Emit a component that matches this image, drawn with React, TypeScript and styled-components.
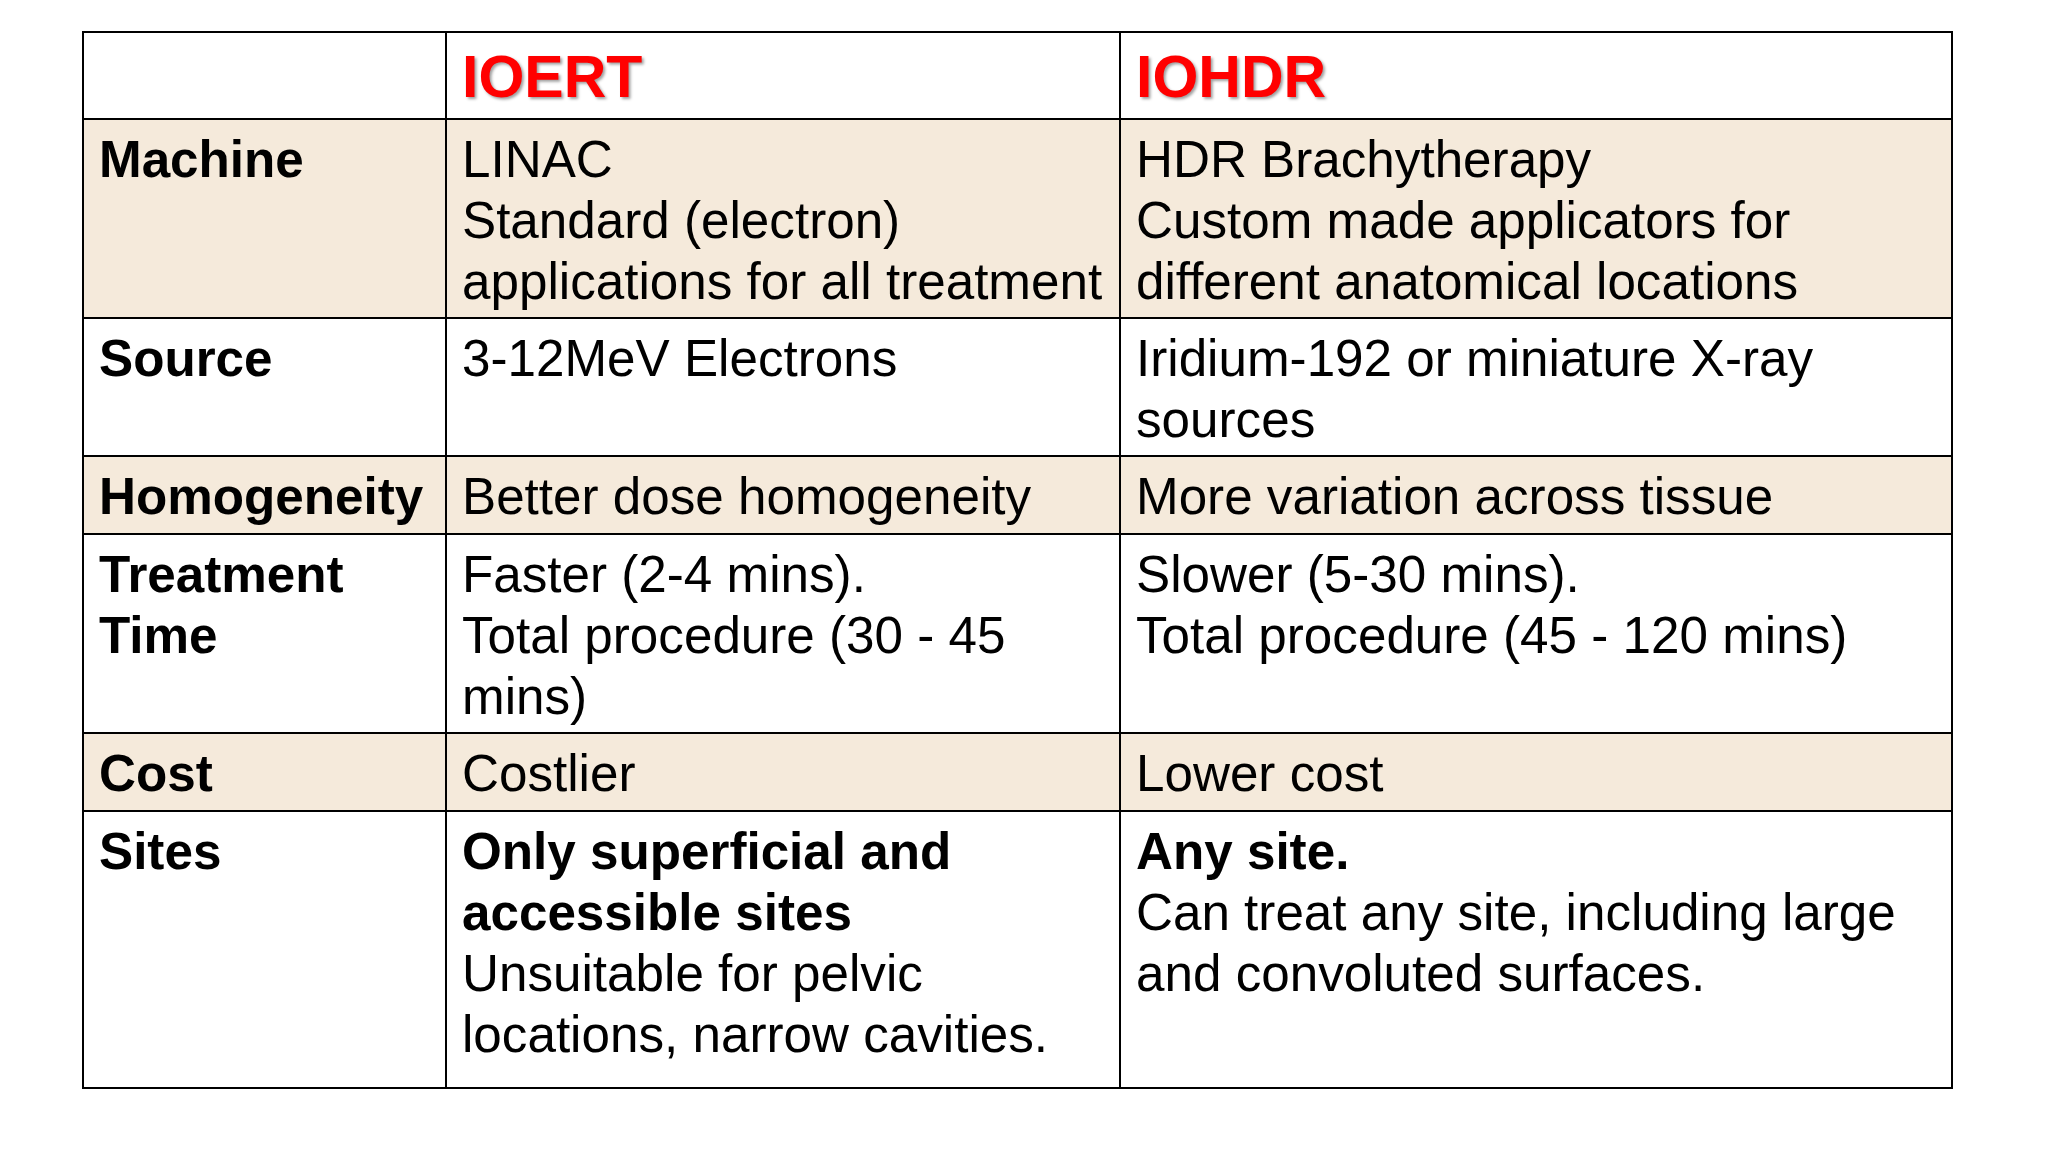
import React from "react";
import styled, {createGlobalStyle} from "styled-components";

const GlobalStyle = createGlobalStyle`
  html, body {
    margin: 0;
    padding: 0;
    background: #ffffff;
  }

  body {
    font-family: "Liberation Sans", Arial, sans-serif;
    color: #000000;
  }
`;

const Page = styled.div`
  width: 2048px;
  height: 1152px;
  padding: 31px 0 0 82px;
  box-sizing: border-box;
`;

const Table = styled.div`
  display: grid;
  grid-template-columns: 363px 674px 832px;
  grid-template-rows: 87px 199px 138px 78px 199px 78px 277px;
  width: max-content;
  border-top: 2px solid #000;
  border-left: 2px solid #000;
`;

const Cell = styled.div<{ $shaded?: boolean }>`
  box-sizing: border-box;
  border-right: 2px solid #000;
  border-bottom: 2px solid #000;
  background: ${({$shaded}) => ($shaded ? "#f5eadb" : "#ffffff")};
  padding: 9px 0 0 15px;
  font-size: 51.2px;
  line-height: 61px;
  white-space: nowrap;
  overflow: hidden;
`;

const Label = styled(Cell)`
  font-weight: 700;
`;

const HeadCell = styled(Cell)`
  padding-top: 9px;
  font-size: 59px;
  line-height: 71px;
  font-weight: 700;
  color: #ff0000;
  text-shadow: 2px 2px 3px rgba(0, 0, 0, 0.38);
`;

const Strong = styled.b`
  font-weight: 700;
`;

type Row = {
  label: React.ReactNode;
  ioert: React.ReactNode;
  iohdr: React.ReactNode;
};

const rows: Row[] = [
  {
    label: "Machine",
    ioert: <>LINAC<br />Standard (electron)<br />applications for all treatment</>,
    iohdr: <>HDR Brachytherapy<br />Custom made applicators for<br />different anatomical locations</>,
  },
  {
    label: "Source",
    ioert: "3-12MeV Electrons",
    iohdr: <>Iridium-192 or miniature X-ray<br />sources</>,
  },
  {
    label: "Homogeneity",
    ioert: "Better dose homogeneity",
    iohdr: "More variation across tissue",
  },
  {
    label: <>Treatment<br />Time</>,
    ioert: <>Faster (2-4 mins).<br />Total procedure (30 - 45<br />mins)</>,
    iohdr: <>Slower (5-30 mins).<br />Total procedure (45 - 120 mins)</>,
  },
  {
    label: "Cost",
    ioert: "Costlier",
    iohdr: "Lower cost",
  },
  {
    label: "Sites",
    ioert: (
      <>
        <Strong>Only superficial and<br />accessible sites</Strong>
        <br />Unsuitable for pelvic<br />locations, narrow cavities.
      </>
    ),
    iohdr: (
      <>
        <Strong>Any site.</Strong>
        <br />Can treat any site, including large<br />and convoluted surfaces.
      </>
    ),
  },
];

const App = () => {
  return (
    <Page>
      <GlobalStyle />
      <Table>
        <HeadCell />
        <HeadCell>IOERT</HeadCell>
        <HeadCell>IOHDR</HeadCell>
        {rows.map((row, i) => {
          const shaded = i % 2 === 0;
          return (
            <React.Fragment key={i}>
              <Label $shaded={shaded}>{row.label}</Label>
              <Cell $shaded={shaded}>{row.ioert}</Cell>
              <Cell $shaded={shaded}>{row.iohdr}</Cell>
            </React.Fragment>
          );
        })}
      </Table>
    </Page>
  );
};

export default App;
